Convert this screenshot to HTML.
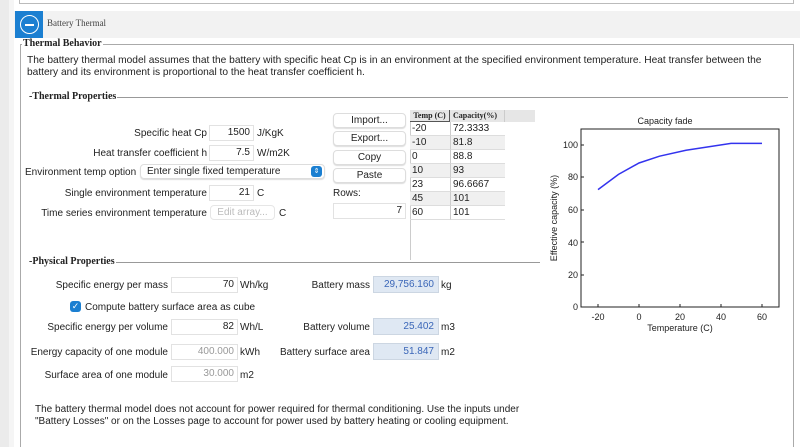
<!DOCTYPE html><html style="width:800px;height:447px;overflow:hidden"><head><style>
*{margin:0;padding:0;box-sizing:border-box}
body{width:800px;height:447px;overflow:hidden;background:#fff;font-family:"Liberation Sans",sans-serif;font-size:10px;color:#222;position:relative}
.a{position:absolute;white-space:nowrap}
.r{text-align:right}
.in{position:absolute;border:1px solid #e2e2e2;background:#fff;text-align:right;padding-right:3px;height:16px;line-height:14px}
.ro{position:absolute;background:#dfe8f3;border:1px solid #ccd6e2;color:#3a66b8;text-align:right;padding-right:4px;height:17px;line-height:15px}
.btn{position:absolute;border:1px solid #ddd;border-radius:4px;background:#fff;text-align:center;height:15px;line-height:13px;box-shadow:0 1px 1px #ddd}
.hd{font-family:"Liberation Serif",serif;font-weight:bold;font-size:10px;background:#fff;padding:0 1px}
.td{position:absolute;height:14px;line-height:14px;padding-left:2px;border-bottom:1px solid #ddd}
</style></head><body>
<div class="a" style="left:0;top:0;width:9px;height:447px;background:#ebebeb"></div>
<div class="a" style="left:9px;top:0;width:5px;height:447px;background:#f5f5f5"></div>
<div class="a" style="left:19px;top:-2px;width:775px;height:6px;border:1px solid #bbb"></div>
<div class="a" style="left:14px;top:11px;width:786px;height:27px;background:#f2f2f2"></div>
<div class="a" style="left:15px;top:11px;width:28px;height:27px;background:#1b7fd1"></div>
<div class="a" style="left:20px;top:15px;width:19px;height:19px;border:1.5px solid #fff;border-radius:50%"></div>
<div class="a" style="left:25px;top:24px;width:9px;height:1.5px;background:#fff"></div>
<div class="a" style="left:47px;top:18px;font-family:'Liberation Serif',serif;font-size:9px;color:#444">Battery Thermal</div>
<div class="a" style="left:20px;top:44px;width:774px;height:420px;border:1px solid #aaa"></div>
<div class="a hd" style="left:22px;top:38px">Thermal Behavior</div>
<div class="a" style="left:27px;top:55px;line-height:12px;font-size:10.2px">The battery thermal model assumes that the battery with specific heat Cp is in an environment at the specified environment temperature. Heat transfer between the<br>battery and its environment is proportional to the heat transfer coefficient h.</div>
<div class="a" style="left:28px;top:97px;width:760px;height:1px;background:#999"></div>
<div class="a hd" style="left:28px;top:91px">-Thermal Properties</div>
<div class="a" style="left:28px;top:262px;width:520px;height:1px;background:#999"></div>
<div class="a hd" style="left:28px;top:256px">-Physical Properties</div>

<div class="a r" style="right:593px;top:128px">Specific heat Cp</div>
<div class="in" style="left:209px;top:125px;width:45px">1500</div><div class="a" style="left:257px;top:128px">J/KgK</div>
<div class="a r" style="right:593px;top:148px">Heat transfer coefficient h</div>
<div class="in" style="left:209px;top:145px;width:45px">7.5</div><div class="a" style="left:257px;top:148px">W/m2K</div>
<div class="a" style="left:25px;top:167px">Environment temp option</div>
<div class="a" style="left:140px;top:164px;width:185px;height:15px;border:1px solid #ddd;border-radius:4px;padding-left:6px;line-height:13px;box-shadow:0 1px 1px #ddd">Enter single fixed temperature</div>
<div class="a" style="left:311px;top:166px;width:11px;height:11px;background:#1b7fd1;border-radius:3px;color:#fff;font-size:7px;text-align:center;line-height:11px">⇕</div>
<div class="a r" style="right:593px;top:188px">Single environment temperature</div>
<div class="in" style="left:209px;top:185px;width:45px">21</div><div class="a" style="left:257px;top:188px">C</div>
<div class="a r" style="right:593px;top:208px">Time series environment temperature</div>
<div class="a" style="left:210px;top:205px;width:65px;height:15px;border:1px solid #e6e6e6;border-radius:4px;color:#bbb;text-align:center;line-height:13px">Edit array...</div><div class="a" style="left:279px;top:208px">C</div>

<div class="btn" style="left:333px;top:113px;width:73px">Import...</div>
<div class="btn" style="left:333px;top:131px;width:73px">Export...</div>
<div class="btn" style="left:333px;top:150px;width:73px">Copy</div>
<div class="btn" style="left:333px;top:168px;width:73px">Paste</div>
<div class="a" style="left:333px;top:188px">Rows:</div>
<div class="in" style="left:333px;top:203px;width:73px">7</div>

<div class="a" style="left:410px;top:110px;width:125px;height:12px;background:#e6e6e6"></div>
<div class="a" style="left:410px;top:110px;width:40px;height:12px;border-right:1px solid #555;border-bottom:1px solid #555;font-family:'Liberation Serif',serif;font-weight:bold;font-size:8px;text-align:center;line-height:11px">Temp (C)</div>
<div class="a" style="left:451px;top:110px;width:54px;height:12px;font-family:'Liberation Serif',serif;font-weight:bold;font-size:8px;padding-left:2px;line-height:11px;border-right:1px solid #ccc">Capacity(%)</div>
<div class="a" style="left:410px;top:122px;width:1px;height:138px;background:#ccc"></div>
<div class="a" style="left:410px;top:122px;width:96px;height:98px">
<div class="td" style="left:0;top:0;width:40px">-20</div><div class="td" style="left:40px;top:0;width:55px;border-left:1px solid #ccc">72.3333</div>
<div class="td" style="left:0;top:14px;width:40px;background:#f0f0f0">-10</div><div class="td" style="left:40px;top:14px;width:55px;border-left:1px solid #ccc;background:#f0f0f0">81.8</div>
<div class="td" style="left:0;top:28px;width:40px">0</div><div class="td" style="left:40px;top:28px;width:55px;border-left:1px solid #ccc">88.8</div>
<div class="td" style="left:0;top:42px;width:40px;background:#f0f0f0">10</div><div class="td" style="left:40px;top:42px;width:55px;border-left:1px solid #ccc;background:#f0f0f0">93</div>
<div class="td" style="left:0;top:56px;width:40px">23</div><div class="td" style="left:40px;top:56px;width:55px;border-left:1px solid #ccc">96.6667</div>
<div class="td" style="left:0;top:70px;width:40px;background:#f0f0f0">45</div><div class="td" style="left:40px;top:70px;width:55px;border-left:1px solid #ccc;background:#f0f0f0">101</div>
<div class="td" style="left:0;top:84px;width:40px">60</div><div class="td" style="left:40px;top:84px;width:55px;border-left:1px solid #ccc">101</div>
</div>

<svg class="a" style="left:540px;top:110px;background:#fff" width="250" height="230" font-family="Liberation Sans,sans-serif" font-size="9" fill="#222">
<text x="125" y="14" text-anchor="middle">Capacity fade</text>
<rect x="41" y="19" width="198" height="178" fill="none" stroke="#222" stroke-width="1"/>
<g text-anchor="end">
<text x="38" y="38">100</text><text x="38" y="70">80</text><text x="38" y="103">60</text><text x="38" y="136">40</text><text x="38" y="168">20</text><text x="38" y="200">0</text></g>
<g stroke="#222"><line x1="41" y1="35" x2="44" y2="35"/><line x1="41" y1="67" x2="44" y2="67"/><line x1="41" y1="100" x2="44" y2="100"/><line x1="41" y1="132" x2="44" y2="132"/><line x1="41" y1="165" x2="44" y2="165"/>
<line x1="58" y1="197" x2="58" y2="194"/><line x1="99" y1="197" x2="99" y2="194"/><line x1="140" y1="197" x2="140" y2="194"/><line x1="181" y1="197" x2="181" y2="194"/><line x1="222" y1="197" x2="222" y2="194"/></g>
<g text-anchor="middle"><text x="58" y="210">-20</text><text x="99" y="210">0</text><text x="140" y="210">20</text><text x="181" y="210">40</text><text x="222" y="210">60</text>
<text x="140" y="221">Temperature (C)</text></g>
<text transform="translate(17,108) rotate(-90)" text-anchor="middle">Effective capacity (%)</text>
<polyline fill="none" stroke="#3333ee" stroke-width="1.5" points="58,79.6 78.5,64.4 99,53 119.5,46.2 146,40.3 191,33.4 222,33.4"/>
</svg>

<div class="a r" style="right:632px;top:280px">Specific energy per mass</div>
<div class="in" style="left:171px;top:277px;width:67px">70</div><div class="a" style="left:240px;top:280px">Wh/kg</div>
<div class="a" style="left:70px;top:301px;width:11px;height:11px;background:#1b7fd1;border-radius:3px;color:#fff;font-size:9px;line-height:11px;text-align:center">✓</div>
<div class="a" style="left:85px;top:302px">Compute battery surface area as cube</div>
<div class="a r" style="right:632px;top:322px">Specific energy per volume</div>
<div class="in" style="left:171px;top:319px;width:67px">82</div><div class="a" style="left:240px;top:322px">Wh/L</div>
<div class="a r" style="right:632px;top:347px">Energy capacity of one module</div>
<div class="in" style="left:171px;top:344px;width:67px;color:#999">400.000</div><div class="a" style="left:240px;top:347px">kWh</div>
<div class="a r" style="right:632px;top:370px">Surface area of one module</div>
<div class="in" style="left:171px;top:366px;width:67px;color:#999">30.000</div><div class="a" style="left:240px;top:370px">m2</div>

<div class="a r" style="right:430px;top:280px">Battery mass</div>
<div class="ro" style="left:373px;top:276px;width:66px">29,756.160</div><div class="a" style="left:441px;top:280px">kg</div>
<div class="a r" style="right:430px;top:322px">Battery volume</div>
<div class="ro" style="left:373px;top:318px;width:66px">25.402</div><div class="a" style="left:441px;top:322px">m3</div>
<div class="a r" style="right:430px;top:347px">Battery surface area</div>
<div class="ro" style="left:373px;top:343px;width:66px">51.847</div><div class="a" style="left:441px;top:347px">m2</div>

<div class="a" style="left:35px;top:404px;line-height:12px">The battery thermal model does not account for power required for thermal conditioning. Use the inputs under<br>"Battery Losses" or on the Losses page to account for power used by battery heating or cooling equipment.</div>
</body></html>
